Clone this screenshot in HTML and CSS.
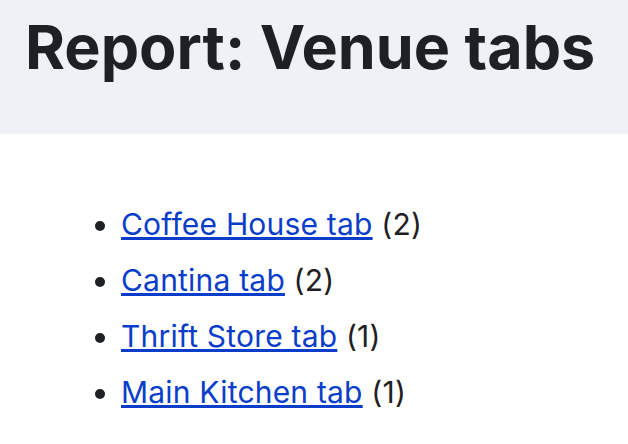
FILE: index.html
```html
<!DOCTYPE html>
<html lang="en">
<head>
  <meta charset="UTF-8">
  <title>Report: Venue tabs</title>
  <link rel="stylesheet" href="styles.css">
</head>
<body>
  <!-- Header -->
  <div class="header">
    <h1>Report: Venue tabs</h1>
  </div>

  <!-- Danh sach tab -->
  <ul class="tab-list">
    <li><a href="#">Coffee House tab</a> (2)</li>
    <li><a href="#">Cantina tab</a> (2)</li>
    <li><a href="#">Thrift Store tab</a> (1)</li>
    <li><a href="#">Main Kitchen tab</a> (1)</li>
  </ul>
</body>
</html>
```

FILE: styles.css
```css
body {
  margin: 0;
  font-family: Inter, "Noto Sans", sans-serif;
  color: #1f2023;
  background-color: #fff;
}
.header {
  background-color: #f0f1f6;
  height: 134px;
  padding: 0 25px;
  box-sizing: border-box;
}
.header h1 {
  margin: 0;
  padding-top: 13px;
  font-size: 61px;
  font-weight: 700;
  line-height: 68px;
}
.tab-list {
  margin: 62px 0 0 0;
  padding-left: 121px;
  font-size: 30px;
  letter-spacing: 0.2px;
  line-height: 56px;
}
.tab-list a {
  color: #0a3dc9;
}
```
